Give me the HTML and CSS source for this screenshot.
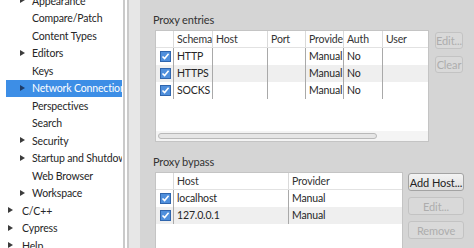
FILE: index.html
```html
<!DOCTYPE html>
<html lang="en">
<head>
    <meta charset="UTF-8">
    <title>Preferences - Network Connections</title>
    <link rel="stylesheet" href="styles.css">
</head>
<body>
    <div class="window">
        <!-- preference tree -->
        <div class="tree">
            <div class="tree-list">
                <div class="node child has-kids"><span class="twisty"></span>Appearance</div>
                <div class="node child"><span class="twisty"></span>Compare/Patch</div>
                <div class="node child"><span class="twisty"></span>Content Types</div>
                <div class="node child has-kids"><span class="twisty"></span>Editors</div>
                <div class="node child"><span class="twisty"></span>Keys</div>
                <div class="node child has-kids selected"><span class="twisty"></span>Network Connections</div>
                <div class="node child"><span class="twisty"></span>Perspectives</div>
                <div class="node child"><span class="twisty"></span>Search</div>
                <div class="node child has-kids"><span class="twisty"></span>Security</div>
                <div class="node child has-kids"><span class="twisty"></span>Startup and Shutdown</div>
                <div class="node child"><span class="twisty"></span>Web Browser</div>
                <div class="node child has-kids"><span class="twisty"></span>Workspace</div>
                <div class="node top has-kids"><span class="twisty"></span>C/C++</div>
                <div class="node top has-kids"><span class="twisty"></span>Cypress</div>
                <div class="node top has-kids"><span class="twisty"></span>Help</div>
            </div>
        </div>

        <div class="sash"></div>

        <!-- page content -->
        <div class="page">
            <div class="group-label">Proxy entries</div>
            <div class="group">
                <div class="table entries">
                    <div class="row head">
                        <div class="cell"></div>
                        <div class="cell">Schema</div>
                        <div class="cell">Host</div>
                        <div class="cell">Port</div>
                        <div class="cell">Provider</div>
                        <div class="cell">Auth</div>
                        <div class="cell">User</div>
                    </div>
                    <div class="row">
                        <div class="cell check"><svg class="box" width="11" height="11" viewBox="0 0 11 11"><rect x="0.5" y="0.5" width="10" height="10" fill="#4f8fdc" stroke="#2f65ad"/><path d="M2.5 5.5 L4.6 7.6 L8.6 2.8" fill="none" stroke="#fff" stroke-width="1.6"/></svg></div>
                        <div class="cell">HTTP</div>
                        <div class="cell"></div>
                        <div class="cell"></div>
                        <div class="cell">Manual</div>
                        <div class="cell">No</div>
                        <div class="cell"></div>
                    </div>
                    <div class="row alt">
                        <div class="cell check"><svg class="box" width="11" height="11" viewBox="0 0 11 11"><rect x="0.5" y="0.5" width="10" height="10" fill="#4f8fdc" stroke="#2f65ad"/><path d="M2.5 5.5 L4.6 7.6 L8.6 2.8" fill="none" stroke="#fff" stroke-width="1.6"/></svg></div>
                        <div class="cell">HTTPS</div>
                        <div class="cell"></div>
                        <div class="cell"></div>
                        <div class="cell">Manual</div>
                        <div class="cell">No</div>
                        <div class="cell"></div>
                    </div>
                    <div class="row">
                        <div class="cell check"><svg class="box" width="11" height="11" viewBox="0 0 11 11"><rect x="0.5" y="0.5" width="10" height="10" fill="#4f8fdc" stroke="#2f65ad"/><path d="M2.5 5.5 L4.6 7.6 L8.6 2.8" fill="none" stroke="#fff" stroke-width="1.6"/></svg></div>
                        <div class="cell">SOCKS</div>
                        <div class="cell"></div>
                        <div class="cell"></div>
                        <div class="cell">Manual</div>
                        <div class="cell">No</div>
                        <div class="cell"></div>
                    </div>
                    <div class="hscroll"><div class="thumb"></div></div>
                </div>
                <div class="buttons narrow">
                    <button disabled>Edit...</button>
                    <button disabled>Clear</button>
                </div>
            </div>

            <div class="group-label second">Proxy bypass</div>
            <div class="group">
                <div class="table bypass">
                    <div class="row head">
                        <div class="cell"></div>
                        <div class="cell">Host</div>
                        <div class="cell">Provider</div>
                    </div>
                    <div class="row">
                        <div class="cell check"><svg class="box" width="11" height="11" viewBox="0 0 11 11"><rect x="0.5" y="0.5" width="10" height="10" fill="#4f8fdc" stroke="#2f65ad"/><path d="M2.5 5.5 L4.6 7.6 L8.6 2.8" fill="none" stroke="#fff" stroke-width="1.6"/></svg></div>
                        <div class="cell">localhost</div>
                        <div class="cell">Manual</div>
                    </div>
                    <div class="row alt">
                        <div class="cell check"><svg class="box" width="11" height="11" viewBox="0 0 11 11"><rect x="0.5" y="0.5" width="10" height="10" fill="#4f8fdc" stroke="#2f65ad"/><path d="M2.5 5.5 L4.6 7.6 L8.6 2.8" fill="none" stroke="#fff" stroke-width="1.6"/></svg></div>
                        <div class="cell">127.0.0.1</div>
                        <div class="cell">Manual</div>
                    </div>
                </div>
                <div class="buttons wide">
                    <button>Add Host...</button>
                    <button disabled>Edit...</button>
                    <button disabled>Remove</button>
                </div>
            </div>
        </div>
    </div>
</body>
</html>
```

FILE: styles.css
```css
/* base */
body {
    margin: 0;
    font-family: Lato, "Segoe UI", sans-serif;
    font-size: 10.5px;
    letter-spacing: -0.15px;
    color: #262626;
}

.window {
    display: flex;
    width: 474px;
    height: 248px;
    overflow: hidden;
}

/* preference tree */
.tree {
    width: 122px;
    flex: none;
    background: #fff;
    overflow: hidden;
}

.tree-list {
    margin-top: -8px;
}

.node {
    display: flex;
    align-items: center;
    height: 17.5px;
    white-space: nowrap;
    overflow: hidden;
}

.node.child {
    padding-left: 20px;
}

.node.top {
    padding-left: 8px;
}

.twisty {
    flex: none;
    width: 12px;
    height: 7px;
}

.node.top .twisty {
    width: 14px;
}

.has-kids .twisty::before {
    content: "";
    display: block;
    width: 0;
    height: 0;
    border-left: 5px solid #3c3c3c;
    border-top: 3.5px solid transparent;
    border-bottom: 3.5px solid transparent;
}

.node.selected {
    margin-left: 6px;
    padding-left: 14px;
    background: #3d8ee6;
    color: #fff;
}

.node.selected .twisty::before {
    border-left-color: #1d3b68;
}

/* splitter between tree and page */
.sash {
    width: 18px;
    flex: none;
    background: linear-gradient(to right, #fff 0 1px, #cacaca 1px 3px, #fff 3px 5px, #cacaca 5px 7px, #e7e7e7 7px);
}

/* right side */
.page {
    flex: 1;
    background: #d5d5d5;
    padding: 12px 0 0 13px;
    display: flex;
    flex-direction: column;
}

.group-label {
    height: 16px;
    line-height: 16px;
    margin-bottom: 2px;
    font-size: 11px;
    color: #333;
}

.group-label.second {
    margin-top: 12px;
}

.group {
    display: flex;
    align-items: flex-start;
    padding-left: 2px;
}

/* tables */
.table {
    flex: none;
    box-sizing: border-box;
    background: #fff;
    border: 1px solid #c4c4c4;
    display: flex;
    flex-direction: column;
}

.entries {
    width: 274px;
    height: 112px;
}

.bypass {
    width: 248px;
    height: 100px;
}

.row {
    display: grid;
    height: 17px;
    box-sizing: border-box;
}

.entries .row {
    grid-template-columns: 17px 39px 55px 38px 38px 39px 1fr;
}

.bypass .row {
    grid-template-columns: 17px 115px 1fr;
}

.row.alt {
    background: #efefef;
}

.cell {
    line-height: 17px;
    padding-left: 3px;
    white-space: nowrap;
    overflow: hidden;
    border-left: 1px solid #a9a9a9;
}

.cell:first-child {
    border-left: none;
    padding-left: 0;
}

.row.head {
    border-bottom: 1px solid #e2e2e2;
}

.row.head .cell {
    line-height: 16px;
    border-left-color: #dadada;
    color: #333;
}

.cell.check {
    display: flex;
    align-items: center;
    justify-content: center;
}

.box {
    display: block;
    margin-left: 2px;
}

/* horizontal scrollbar of the entries table */
.hscroll {
    margin-top: auto;
    height: 10px;
    background: #f4f4f4;
    padding: 2px 0 0 2px;
    box-sizing: border-box;
}

.thumb {
    width: 219px;
    height: 6px;
    box-sizing: border-box;
    border: 1px solid #b9b9b9;
    border-radius: 4px;
    background: #e6e6e6;
}

/* buttons */
.buttons {
    display: flex;
    flex-direction: column;
}

.buttons.narrow {
    width: 28px;
    margin: 2px 0 0 6px;
    gap: 7px;
}

.buttons.wide {
    width: 56px;
    margin: 1px 0 0 5px;
    gap: 6px;
}

button {
    height: 18px;
    padding: 0;
    font-family: inherit;
    font-size: 11px;
    letter-spacing: -0.1px;
    color: #222;
    border: 1px solid #a3a3a3;
    border-radius: 3px;
    background: linear-gradient(#f3f3f3, #dfdfdf);
    white-space: nowrap;
    overflow: hidden;
}

button:disabled {
    color: #adadad;
    border-color: #c3c3c3;
    background: #d9d9d9;
}

.buttons.narrow button {
    height: 17px;
}
```
